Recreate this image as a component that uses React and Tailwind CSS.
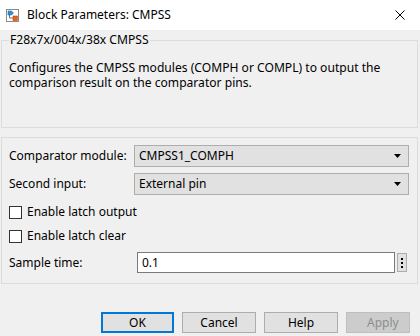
import React from "react";

function BlockIcon() {
  return (
    <svg width="13" height="13" viewBox="0 0 13 13">
      <rect x="0.5" y="0.5" width="12" height="12" fill="#fff" stroke="#8a8a8a" />
      <path d="M2 2 H5.5 L7.5 4 L5.5 6 H2 Z" fill="#2f8fd8" stroke="#1d6fb0" strokeWidth="0.6" />
      <path d="M3.5 6 V9 H7" fill="none" stroke="#555" strokeWidth="0.8" />
      <rect x="7" y="7" width="4.5" height="4.5" fill="#e8621a" stroke="#b84a10" strokeWidth="0.6" />
    </svg>
  );
}

function Arrow() {
  return (
    <svg width="7" height="4" viewBox="0 0 7 4" className="absolute right-[7px] top-[8px]">
      <path d="M0 0 H7 L3.5 4 Z" fill="#000" />
    </svg>
  );
}

function Select({ value }) {
  return (
    <div className="relative w-[275px] h-[22px] bg-[#e1e1e1] border border-[#adadad] flex items-center pl-[4px]">
      <span>{value}</span>
      <Arrow />
    </div>
  );
}

function Checkbox({ label }) {
  return (
    <div className="flex items-center h-[22px] pl-[7px]">
      <div className="w-[13px] h-[13px] bg-white border border-[#333333]" />
      <span className="ml-[5px]">{label}</span>
    </div>
  );
}

export default function App() {
  return (
    <div
      className="w-[420px] h-[336px] bg-[#f0f0f0] flex flex-col text-[12px] text-black overflow-hidden"
      style={{ fontFamily: '"Noto Sans", "Open Sans", sans-serif' }}
    >
      <div className="h-[30px] bg-white flex items-center shrink-0">
        <div className="ml-[6px] flex items-center">
          <BlockIcon />
        </div>
        <span className="ml-[8px] text-[12px]">Block Parameters: CMPSS</span>
        <div className="ml-auto mr-[15px] flex items-center">
          <svg width="10" height="10" viewBox="0 0 10 10">
            <path d="M0.5 0.5 L9.5 9.5 M9.5 0.5 L0.5 9.5" stroke="#000" strokeWidth="1" />
          </svg>
        </div>
      </div>

      <div className="relative mt-[10px] ml-[1px] w-[417px] h-[88px] border border-[#dcdcdc] shrink-0 pt-[19px] px-[7px] leading-[15px] text-[12.1px]">
        <span className="absolute left-[7px] top-[-9px] bg-[#f0f0f0] px-[1px] leading-[16px]">
          F28x7x/004x/38x CMPSS
        </span>
        <div>Configures the CMPSS modules (COMPH or COMPL) to output the</div>
        <div>comparison result on the comparator pins.</div>
      </div>

      <div className="mt-[9px] ml-[1px] w-[417px] h-[147px] border border-[#dcdcdc] shrink-0 pt-[7px] flex flex-col">
        <div className="flex items-center h-[22px]">
          <span className="pl-[7px] w-[132px]">Comparator module:</span>
          <Select value="CMPSS1_COMPH" />
        </div>
        <div className="flex items-center h-[22px] mt-[6px]">
          <span className="pl-[7px] w-[132px]">Second input:</span>
          <Select value="External pin" />
        </div>
        <div className="mt-[6px]">
          <Checkbox label="Enable latch output" />
        </div>
        <div className="mt-[2px]">
          <Checkbox label="Enable latch clear" />
        </div>
        <div className="flex items-center h-[21px] mt-[5px]">
          <span className="pl-[7px] w-[135px]">Sample time:</span>
          <div className="w-[258px] h-[21px] bg-white border border-[#7a7a7a] flex items-center pl-[4px]">
            0.1
          </div>
          <div className="ml-[2px] w-[10px] h-[19px] bg-[#e1e1e1] border border-[#adadad] flex flex-col items-center justify-center gap-[2px]">
            <div className="w-[2px] h-[2px] bg-black" />
            <div className="w-[2px] h-[2px] bg-black" />
            <div className="w-[2px] h-[2px] bg-black" />
          </div>
        </div>
      </div>

      <div className="flex mt-[28px] ml-[101px] gap-[8px] shrink-0">
        <div className="w-[73px] h-[21px] border-2 border-[#0078d7] bg-[#e1e1e1] flex items-center justify-center">
          OK
        </div>
        <div className="w-[74px] h-[21px] border border-[#adadad] bg-[#e1e1e1] flex items-center justify-center">
          Cancel
        </div>
        <div className="w-[74px] h-[21px] border border-[#adadad] bg-[#e1e1e1] flex items-center justify-center">
          Help
        </div>
        <div className="w-[64px] h-[21px] border border-[#bfbfbf] bg-[#cccccc] flex items-center pl-[20px] text-[#8c8c8c]">
          Apply
        </div>
      </div>
    </div>
  );
}
